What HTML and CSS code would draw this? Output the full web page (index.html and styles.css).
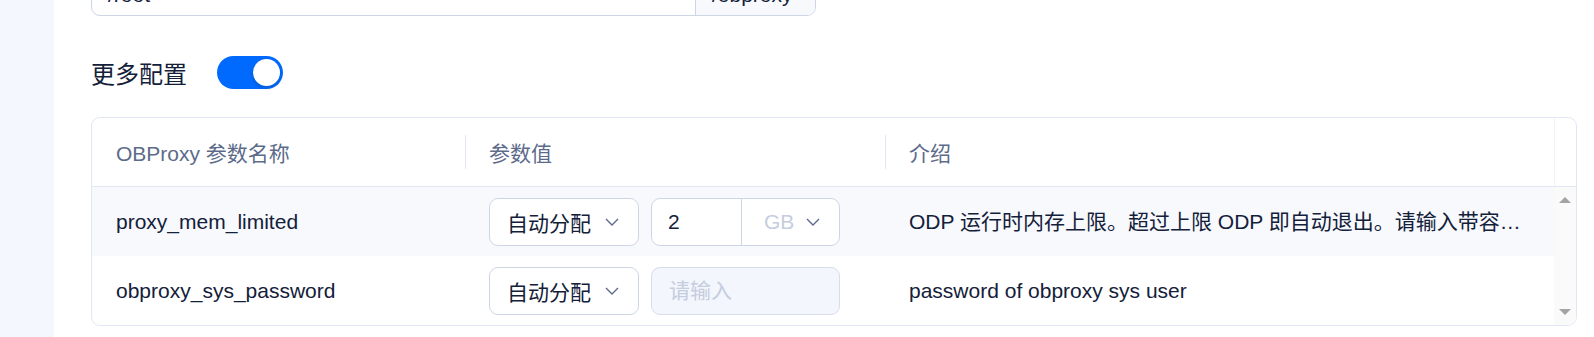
FILE: index.html
```html
<!DOCTYPE html>
<html lang="zh-CN">
<head>
    <meta charset="UTF-8">
    <title>OBProxy 配置</title>
    <link rel="stylesheet" href="styles.css">
</head>
<body>
    <div class="layout">
        <aside class="side"></aside>
        <main class="main">
            <div class="path-group">
                <div class="path-input">/root</div>
                <div class="path-addon">/obproxy</div>
            </div>

            <div class="more">
                <span class="more-label">更多配置</span>
                <span class="switch"><span class="knob"></span></span>
            </div>

            <div class="param-table">
                <div class="thead">
                    <div class="th">OBProxy 参数名称</div>
                    <div class="th sep">参数值</div>
                    <div class="th sep">介绍</div>
                    <div class="th-scroll"></div>
                </div>
                <div class="tbody">
                    <div class="rows">
                        <div class="tr active">
                            <div class="td">proxy_mem_limited</div>
                            <div class="td">
                                <div class="select">
                                    <span>自动分配</span>
                                    <svg class="arrow" width="14" height="8" viewBox="0 0 14 8"><path d="M1 1l6 6 6-6" fill="none" stroke="#5c6b8a" stroke-width="1.4"/></svg>
                                </div>
                                <div class="num-group">
                                    <div class="num">2</div>
                                    <div class="unit">
                                        <span>GB</span>
                                        <svg class="arrow" width="14" height="8" viewBox="0 0 14 8"><path d="M1 1l6 6 6-6" fill="none" stroke="#5c6b8a" stroke-width="1.4"/></svg>
                                    </div>
                                </div>
                            </div>
                            <div class="td desc">ODP 运行时内存上限。超过上限 ODP 即自动退出。请输入带容量单位的参数值，如 2GB</div>
                        </div>
                        <div class="tr">
                            <div class="td">obproxy_sys_password</div>
                            <div class="td">
                                <div class="select">
                                    <span>自动分配</span>
                                    <svg class="arrow" width="14" height="8" viewBox="0 0 14 8"><path d="M1 1l6 6 6-6" fill="none" stroke="#5c6b8a" stroke-width="1.4"/></svg>
                                </div>
                                <div class="text-input disabled">请输入</div>
                            </div>
                            <div class="td desc">password of obproxy sys user</div>
                        </div>
                    </div>
                    <div class="scrollbar">
                        <span class="tri up"></span>
                        <span class="tri down"></span>
                    </div>
                </div>
            </div>
        </main>
    </div>
</body>
</html>
```

FILE: styles.css
```css
body {
    margin: 0;
    font-family: 'Liberation Sans', 'Noto Sans CJK SC', sans-serif;
    color: #132039;
    background: #fff;
    overflow: hidden;
}
.layout {
    display: flex;
    height: 337px;
}
.side {
    width: 54px;
    flex-shrink: 0;
    background: #f4f7fd;
}
.main {
    flex: 1;
    padding: 0 17px 0 37px;
}

/* путь установки */
.path-group {
    display: flex;
    width: 725px;
    height: 48px;
    margin-top: -32px;
    border: 1px solid #cdd6e4;
    border-radius: 9px;
    box-sizing: border-box;
    font-size: 21px;
    overflow: hidden;
}
.path-input {
    flex: 1;
    padding: 6px 16px 0;
    line-height: 40px;
}
.path-addon {
    width: 120px;
    padding: 6px 16px 0;
    box-sizing: border-box;
    line-height: 40px;
    background: #f7f9fd;
    border-left: 1px solid #cdd6e4;
    color: #132039;
}

.more {
    display: flex;
    align-items: center;
    gap: 30px;
    margin-top: 40px;
    height: 33px;
}
.more-label {
    font-size: 24px;
}
.switch {
    position: relative;
    width: 66px;
    height: 33px;
    border-radius: 17px;
    background: #006aff;
}
.knob {
    position: absolute;
    top: 3px;
    right: 3px;
    width: 27px;
    height: 27px;
    border-radius: 50%;
    background: #fff;
    box-shadow: 0 2px 4px rgba(0, 35, 11, 0.2);
}

/* таблица */
.param-table {
    margin-top: 28px;
    border: 1px solid #e2e8f3;
    border-radius: 9px;
    overflow: hidden;
    font-size: 21px;
}
.thead {
    display: grid;
    grid-template-columns: 373px 420px 1fr 22px;
    height: 68px;
    border-bottom: 1px solid #e2e8f3;
}
.th {
    position: relative;
    display: flex;
    align-items: center;
    padding: 0 24px;
    color: #5c6b8a;
}
.th.sep::before {
    content: '';
    position: absolute;
    left: 0;
    top: 17px;
    height: 34px;
    width: 1px;
    background: #e2e8f3;
}
.th-scroll {
    border-left: 1px solid #f0f2f6;
}
.tbody {
    display: flex;
}
.rows {
    flex: 1;
}
.tr {
    display: grid;
    grid-template-columns: 373px 420px 1fr;
    height: 69px;
}
.tr.active {
    background: #f7f9fd;
}
.td {
    display: flex;
    align-items: center;
    gap: 12px;
    padding: 0 24px;
    min-width: 0;
}
.desc {
    display: block;
    line-height: 69px;
    white-space: nowrap;
    overflow: hidden;
    text-overflow: ellipsis;
}

.select {
    display: flex;
    align-items: center;
    justify-content: space-between;
    width: 150px;
    height: 48px;
    padding: 0 19px 0 17px;
    box-sizing: border-box;
    background: #fff;
    border: 1px solid #cdd6e4;
    border-radius: 9px;
}
.num-group {
    display: flex;
    width: 189px;
    height: 48px;
    box-sizing: border-box;
    border: 1px solid #cdd6e4;
    border-radius: 9px;
    background: #fff;
}
.num {
    width: 90px;
    padding-left: 16px;
    box-sizing: border-box;
    line-height: 46px;
    border-right: 1px solid #cdd6e4;
}
.unit {
    flex: 1;
    display: flex;
    align-items: center;
    justify-content: space-between;
    padding: 0 19px 0 22px;
    color: #c5cdde;
}
.text-input {
    width: 189px;
    height: 48px;
    padding-left: 17px;
    box-sizing: border-box;
    line-height: 46px;
    border: 1px solid #d6deeb;
    border-radius: 9px;
}
.text-input.disabled {
    background: #f3f6fc;
    color: #c5cdde;
}

.scrollbar {
    width: 22px;
    display: flex;
    flex-direction: column;
    justify-content: space-between;
    align-items: center;
    padding: 10px 0;
    background: #fafafa;
}
.tri {
    width: 0;
    height: 0;
    border-left: 6px solid transparent;
    border-right: 6px solid transparent;
}
.tri.up {
    border-bottom: 6px solid #a3a3a3;
}
.tri.down {
    border-top: 6px solid #a3a3a3;
}
```
